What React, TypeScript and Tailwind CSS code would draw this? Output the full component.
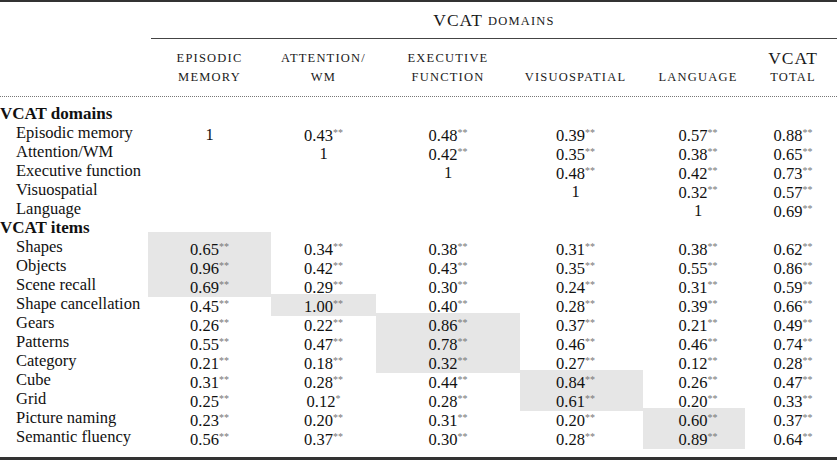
import React from "react";

const GRID = "grid grid-cols-[148px_123px_105px_144px_123px_102px_92px]";
const PAD = ["", "", "", "", "pr-[12px]", "pl-[8px]", "pl-[4px]"];

type V = string;

const domainRows: { label: string; vals: V[] }[] = [
  { label: "Episodic memory", vals: ["1", "0.43**", "0.48**", "0.39**", "0.57**", "0.88**"] },
  { label: "Attention/WM", vals: ["", "1", "0.42**", "0.35**", "0.38**", "0.65**"] },
  { label: "Executive function", vals: ["", "", "1", "0.48**", "0.42**", "0.73**"] },
  { label: "Visuospatial", vals: ["", "", "", "1", "0.32**", "0.57**"] },
  { label: "Language", vals: ["", "", "", "", "1", "0.69**"] },
];

const itemRows: { label: string; vals: V[]; shade: number; ext?: boolean }[] = [
  { label: "Shapes", vals: ["0.65**", "0.34**", "0.38**", "0.31**", "0.38**", "0.62**"], shade: 0, ext: true },
  { label: "Objects", vals: ["0.96**", "0.42**", "0.43**", "0.35**", "0.55**", "0.86**"], shade: 0 },
  { label: "Scene recall", vals: ["0.69**", "0.29**", "0.30**", "0.24**", "0.31**", "0.59**"], shade: 0 },
  { label: "Shape cancellation", vals: ["0.45**", "1.00**", "0.40**", "0.28**", "0.39**", "0.66**"], shade: 1 },
  { label: "Gears", vals: ["0.26**", "0.22**", "0.86**", "0.37**", "0.21**", "0.49**"], shade: 2 },
  { label: "Patterns", vals: ["0.55**", "0.47**", "0.78**", "0.46**", "0.46**", "0.74**"], shade: 2 },
  { label: "Category", vals: ["0.21**", "0.18**", "0.32**", "0.27**", "0.12**", "0.28**"], shade: 2 },
  { label: "Cube", vals: ["0.31**", "0.28**", "0.44**", "0.84**", "0.26**", "0.47**"], shade: 3 },
  { label: "Grid", vals: ["0.25**", "0.12*", "0.28**", "0.61**", "0.20**", "0.33**"], shade: 3 },
  { label: "Picture naming", vals: ["0.23**", "0.20**", "0.31**", "0.20**", "0.60**", "0.37**"], shade: 4 },
  { label: "Semantic fluency", vals: ["0.56**", "0.37**", "0.30**", "0.28**", "0.89**", "0.64**"], shade: 4 },
];

function Val({ v }: { v: string }) {
  const m = v.match(/^([^*]*)(\**)$/);
  const num = m ? m[1] : v;
  const stars = m ? m[2] : "";
  return (
    <span>
      {num}
      {stars && <span className="text-[10px] text-[#777] align-[5px]">{stars}</span>}
    </span>
  );
}

function Row({ label, vals, bold, shade, ext }: { label: string; vals: V[]; bold?: boolean; shade?: number; ext?: boolean }) {
  return (
    <div className={`${GRID} h-[19px] leading-[19px]`}>
      <div className={bold ? "font-bold text-[17px] whitespace-nowrap" : "pl-[16px] whitespace-nowrap"}>{label}</div>
      {!bold &&
        vals.map((v, i) => {
          const shaded = shade === i;
          return (
            <div
              key={i}
              className={`flex items-center justify-center ${PAD[i + 1]} ${shaded ? "bg-[#e6e6e6]" : ""} ${
                shaded && ext ? "-mt-[5px] pt-[5px]" : ""
              }`}
            >
              {v && <Val v={v} />}
            </div>
          );
        })}
    </div>
  );
}

function Hd({ children }: { children: React.ReactNode }) {
  return <span className="text-[12.5px] tracking-[1.2px] uppercase">{children}</span>;
}

export default function App() {
  return (
    <div className="w-[837px] h-[460px] bg-white text-[#111] font-['Liberation_Serif',serif] text-[16.5px] overflow-hidden">
      <div className="border-t-2 border-[#333]">
        <div className="ml-[151px] h-[37px] border-b border-[#444] flex items-center justify-center text-[#1a1a1a]">
          <span className="text-[17.5px] tracking-[1px]">VCAT</span>
          <span className="ml-[5px]">
            <Hd>domains</Hd>
          </span>
        </div>
        <div className={`${GRID} h-[58px] pt-[10px] pb-[10px] border-b border-dotted border-[#777] text-[#1a1a1a] leading-[19px]`}>
          <div />
          <div className="flex flex-col items-center justify-end">
            <Hd>episodic</Hd>
            <Hd>memory</Hd>
          </div>
          <div className="flex flex-col items-center justify-end">
            <Hd>attention/</Hd>
            <Hd>wm</Hd>
          </div>
          <div className="flex flex-col items-center justify-end">
            <Hd>executive</Hd>
            <Hd>function</Hd>
          </div>
          <div className="flex flex-col items-center justify-end pr-[12px]">
            <Hd>visuospatial</Hd>
          </div>
          <div className="flex flex-col items-center justify-end pl-[8px]">
            <Hd>language</Hd>
          </div>
          <div className="flex flex-col items-center justify-end pl-[4px]">
            <span className="text-[17.5px] tracking-[1px] leading-[19px]">VCAT</span>
            <Hd>total</Hd>
          </div>
        </div>
        <div className="pt-[7px] pb-[11px] border-b-[3px] border-[#333]">
          <Row label="VCAT domains" vals={[]} bold />
          {domainRows.map((r) => (
            <Row key={r.label} label={r.label} vals={r.vals} />
          ))}
          <Row label="VCAT items" vals={[]} bold />
          {itemRows.map((r) => (
            <Row key={r.label} label={r.label} vals={r.vals} shade={r.shade} ext={r.ext} />
          ))}
        </div>
      </div>
    </div>
  );
}
